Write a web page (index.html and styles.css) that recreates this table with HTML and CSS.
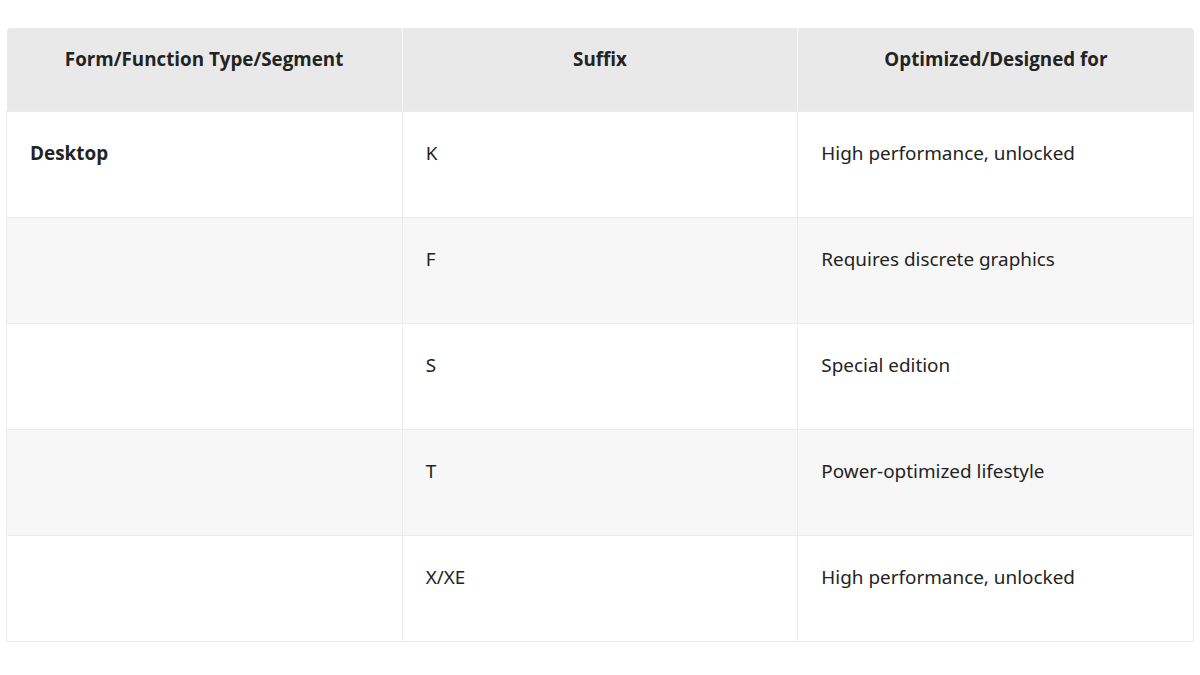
FILE: index.html
```html
<!DOCTYPE html>
<html lang="en">
<head>
<meta charset="utf-8">
<title>Suffix table</title>
<link rel="stylesheet" href="styles.css">
</head>
<body>
<div class="wrap">
  <table class="spec">
    <thead>
      <tr>
        <th>Form/Function Type/Segment</th>
        <th>Suffix</th>
        <th>Optimized/Designed for</th>
      </tr>
    </thead>
    <tbody>
      <tr><td class="seg">Desktop</td><td>K</td><td>High performance, unlocked</td></tr>
      <tr class="alt"><td></td><td>F</td><td>Requires discrete graphics</td></tr>
      <tr><td></td><td>S</td><td>Special edition</td></tr>
      <tr class="alt"><td></td><td>T</td><td>Power-optimized lifestyle</td></tr>
      <tr><td></td><td>X/XE</td><td>High performance, unlocked</td></tr>
    </tbody>
  </table>
</div>
</body>
</html>
```
FILE: styles.css
```css
html, body {
  margin: 0;
  padding: 0;
  background: #ffffff;
}
.wrap {
  padding: 28px 6px 0 6px;
  height: 675px;
  box-sizing: border-box;
  overflow: hidden;
}
.spec {
  width: 100%;
  border-collapse: collapse;
  table-layout: fixed;
  color: #232323;
  font-family: "Open Sans", "Noto Sans", sans-serif;
}
.spec th {
  background: #e9e9e9;
  font-weight: 700;
  font-size: 18.8px;
  line-height: 24px;
  height: 83px;
  box-sizing: border-box;
  padding: 19px 23px 40px;
  text-align: center;
  vertical-align: top;
  border-left: 1px solid #f4f4f4;
}
.spec th:first-child { border-left: none; border-top-left-radius: 4px; }
.spec th:last-child { border-top-right-radius: 4px; }
.spec td {
  font-size: 18.9px;
  line-height: 26px;
  height: 106px;
  box-sizing: border-box;
  padding: 28px 23px 0;
  vertical-align: top;
  border: 1px solid #ebebeb;
  font-family: "Noto Sans", "Open Sans", sans-serif;
}
.spec td.seg {
  font-weight: 700;
  font-family: "Open Sans", "Noto Sans", sans-serif;
}
.spec tr.alt td { background: #f7f7f7; }
```
